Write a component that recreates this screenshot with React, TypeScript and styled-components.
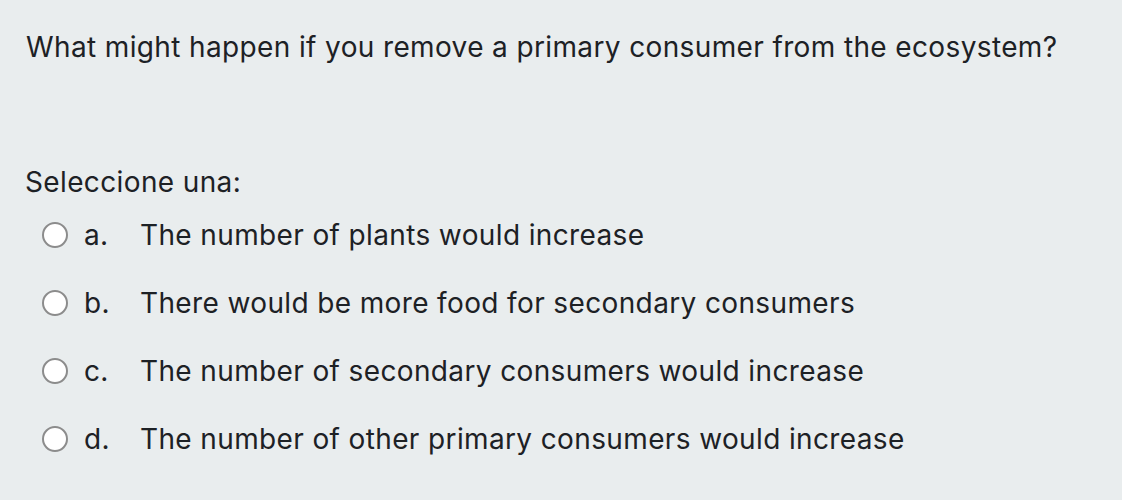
import React from "react";
import styled, { createGlobalStyle } from "styled-components";

const Global = createGlobalStyle`
  html, body {
    margin: 0;
    padding: 0;
    background: #e9edee;
  }
  body {
    font-family: Inter, "Liberation Sans", Arial, sans-serif;
    color: #1d2125;
    letter-spacing: 0.37px;
  }
`;

const Page = styled.div`
  width: 1122px;
  height: 500px;
  box-sizing: border-box;
  padding: 30px 0 0 25px;
  background: #e9edee;
`;

const Question = styled.p`
  margin: 0 0 0 1px;
  font-size: 28px;
  line-height: 34px;
`;

const Prompt = styled.div`
  margin-top: 101px;
  font-size: 28px;
  line-height: 34px;
`;

const Options = styled.div`
  display: flex;
  flex-direction: column;
  margin-top: 2px;
  padding-left: 17px;
`;

const Row = styled.label`
  display: flex;
  align-items: center;
  height: 68px;
  font-size: 28px;
  line-height: 34px;
  cursor: pointer;
`;

const Radio = styled.span`
  box-sizing: border-box;
  width: 26px;
  height: 26px;
  border-radius: 50%;
  border: 2px solid #8c8c8c;
  background: #ffffff;
  flex: none;
`;

const Letter = styled.span`
  width: 56px;
  margin-left: 16px;
  flex: none;
`;

const Text = styled.span``;

const options = [
  { l: "a.", t: "The number of plants would increase" },
  { l: "b.", t: "There would be more food for secondary consumers" },
  { l: "c.", t: "The number of secondary consumers would increase" },
  { l: "d.", t: "The number of other primary consumers would increase" },
];

export default function App() {
  return (
    <>
      <Global />
      <Page>
        <Question>What might happen if you remove a primary consumer from the ecosystem?</Question>
        <Prompt>Seleccione una:</Prompt>
        <Options>
          {options.map((o) => (
            <Row key={o.l}>
              <Radio />
              <Letter>{o.l}</Letter>
              <Text>{o.t}</Text>
            </Row>
          ))}
        </Options>
      </Page>
    </>
  );
}
